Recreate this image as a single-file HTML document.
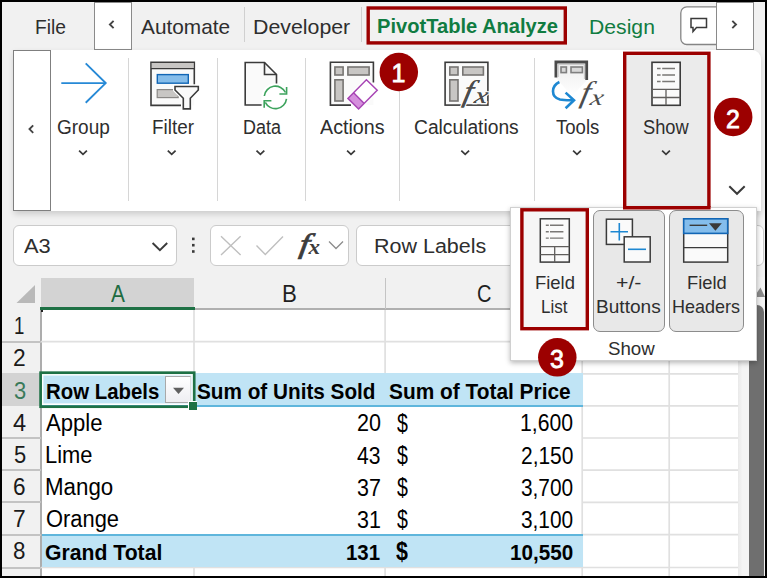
<!DOCTYPE html>
<html lang="en">
<head>
<meta charset="utf-8">
<title>PivotTable Analyze - Show - Field List</title>
<style>
html,body{margin:0;padding:0;}
body{width:767px;height:578px;overflow:hidden;background:#f1f1f1;position:relative;font-family:"Liberation Sans",sans-serif;}
#app{position:absolute;left:0;top:0;width:767px;height:578px;overflow:hidden;}
.abs,.a{position:absolute;}
.t{position:absolute;white-space:nowrap;line-height:1;transform-origin:0 0;color:#2e2e2e;}
.sep{position:absolute;width:1px;background:#d6d6d6;}
.gl{position:absolute;background:#e7e7e7;}
svg{position:absolute;overflow:visible;}
.circ{position:absolute;width:38px;height:38px;border-radius:50%;background:#990000;}
</style>
</head>
<body>
<div id="app">
<!-- ===== tab row ===== -->
<div class="a" style="left:94px;top:2px;width:36px;height:46px;background:#fff;border:1px solid #8a8a8a;"></div>
<svg style="left:0;top:0" width="767" height="578" viewBox="0 0 767 578"><path d="M113.6 20.9 L109.9 24.5 L113.6 28.1" fill="none" stroke="#444" stroke-width="1.9"/></svg>
<div class="sep" style="left:244px;top:7px;height:35px;background:#d0d0d0"></div>
<div class="sep" style="left:361px;top:7px;height:35px;background:#d0d0d0"></div>
<svg style="left:0;top:0" width="767" height="578" viewBox="0 0 767 578"><rect x="368.2" y="8" width="197.1" height="34.9" fill="none" stroke="#9c0000" stroke-width="3.4"/></svg>
<svg style="left:0;top:0" width="767" height="578" viewBox="0 0 767 578"><rect x="680.8" y="6.9" width="42" height="37.6" rx="6" fill="#fff" stroke="#858585" stroke-width="1.3"/></svg>
<svg style="left:689px;top:16px" width="20" height="18" viewBox="0 0 20 18"><path d="M2 2.5 H17.5 V11.5 H7.5 L4 15.5 V11.5 H2 Z" fill="none" stroke="#3a3a3a" stroke-width="1.5" stroke-linejoin="miter"/></svg>
<div class="a" style="left:716px;top:2px;width:36px;height:46px;background:#fff;border:1px solid #8a8a8a;"></div>
<svg style="left:0;top:0" width="767" height="578" viewBox="0 0 767 578"><path d="M732.3 20.9 L736 24.5 L732.3 28.1" fill="none" stroke="#444" stroke-width="1.9"/></svg>

<!-- ===== ribbon panel ===== -->
<div class="a" style="left:14px;top:50px;width:747px;height:161px;background:#fff;border-radius:0 9px 0 0;box-shadow:0 3px 6px rgba(0,0,0,.16);"></div>
<div class="a" style="left:13px;top:50px;width:36.2px;height:159.2px;background:#fff;border:1px solid #7f7f7f;box-sizing:content-box;"></div>
<svg style="left:0;top:0" width="767" height="578" viewBox="0 0 767 578"><path d="M33.2 125.4 L29.5 129.1 L33.2 132.8" fill="none" stroke="#444" stroke-width="1.9"/></svg>
<div class="sep" style="left:128px;top:58px;height:143px"></div>
<div class="sep" style="left:217px;top:58px;height:143px"></div>
<div class="sep" style="left:305px;top:58px;height:143px"></div>
<div class="sep" style="left:399px;top:58px;height:143px"></div>
<div class="sep" style="left:534px;top:58px;height:143px"></div>
<!-- Show selected box -->
<svg style="left:0;top:0" width="767" height="578" viewBox="0 0 767 578"><rect x="624.7" y="53.3" width="84.2" height="154.5" fill="#ebebeb" stroke="#9c0000" stroke-width="3.4"/></svg>
<svg style="left:0;top:0" width="767" height="578" viewBox="0 0 767 578">
<!-- Group arrow -->
<g fill="none" stroke="#2689d6" stroke-width="1.9" stroke-linecap="butt">
<path d="M61.3 83.1 H105"/><path d="M85.7 63.4 L105.7 83.1 L85.7 102.8"/>
</g>
<!-- label chevrons -->
<g fill="none" stroke="#3a3a3a" stroke-width="1.8">
<path d="M79.1 150.7 L83.0 154.3 L86.9 150.7"/>
<path d="M167.8 150.7 L171.7 154.3 L175.6 150.7"/>
<path d="M256.5 150.7 L260.4 154.3 L264.3 150.7"/>
<path d="M347.1 150.7 L351.0 154.3 L354.9 150.7"/>
<path d="M461.3 150.7 L465.2 154.3 L469.1 150.7"/>
<path d="M573.1 150.7 L577.0 154.3 L580.9 150.7"/>
<path d="M662.1 150.7 L666.0 154.3 L669.9 150.7"/>
<path d="M729.3 186.2 L737 193.8 L744.7 186.2" stroke-width="2"/>
</g>
<!-- Filter icon -->
<g>
<rect x="151" y="62.2" width="43.3" height="43.2" fill="#fafafa"/>
<path d="M181 105.4 H151 V62.2 H194.3 V84.6" fill="none" stroke="#3b3b3b" stroke-width="1.6"/>
<rect x="151.8" y="63" width="41.7" height="5.2" fill="#c8c6c4"/>
<path d="M151 68.6 H194.3" stroke="#3b3b3b" stroke-width="1.3"/>
<rect x="157.3" y="74.6" width="31" height="8.6" fill="#86bdea" stroke="#1266b5" stroke-width="1.4"/>
<rect x="157.2" y="89.6" width="21" height="8" fill="#c8c6c4" stroke="#8a8886" stroke-width="1.2"/>
<path d="M175 86.5 H198.3 V90 L190.3 98.3 V108.9 H183.3 V98.3 L175 90 Z" fill="#fff" stroke="#fff" stroke-width="4"/>
<path d="M175 86.5 H198.3 V90 L190.3 98.3 V108.9 H183.3 V98.3 L175 90 Z" fill="#fafafa" stroke="#3b3b3b" stroke-width="1.6"/>
</g>
<!-- Data icon -->
<g>
<path d="M245.2 62.5 H264.5 L276.5 74.5 V105 H245.2 Z" fill="#fafafa" stroke="none"/>
<circle cx="275.4" cy="97.4" r="14" fill="#fff"/>
<path d="M261.6 105 H245.2 V62.5 H264.5 L276.5 74.5 V83.6" fill="none" stroke="#3b3b3b" stroke-width="1.6"/>
<path d="M264.5 62.5 V74.5 H276.5" fill="none" stroke="#3b3b3b" stroke-width="1.6"/>
<g fill="none" stroke="#3da35d" stroke-width="1.6">
<path d="M264.3 96 A11.2 11.2 0 0 1 285.5 92.5"/>
<path d="M286.6 87 V94 H279.4"/>
<path d="M286.5 98.8 A11.2 11.2 0 0 1 265.3 102.3"/>
<path d="M264.2 107.8 V100.8 H271.4"/>
</g>
</g>
<!-- Actions icon -->
<g>
<rect x="330.4" y="62.3" width="43" height="42.8" fill="#fafafa"/>
<path d="M351 105.1 H330.4 V62.3 H373.4 V82.6" fill="none" stroke="#3b3b3b" stroke-width="1.6"/>
<rect x="334.9" y="67" width="8.2" height="8" fill="#c8c6c4" stroke="#777573" stroke-width="1.6"/>
<rect x="347.9" y="67" width="21.2" height="8" fill="#c8c6c4" stroke="#777573" stroke-width="1.6"/>
<rect x="334.9" y="79.8" width="8.2" height="21.2" fill="#c8c6c4" stroke="#777573" stroke-width="1.6"/>
<path d="M366.4 79.8 L377.2 90.2 L358.6 109 L347.9 98.4 Z" fill="#fff" stroke="#fff" stroke-width="4"/>
<path d="M353.6 92.8 L364.2 103.5 L358.6 109 L347.9 98.4 Z" fill="#d58fdd"/>
<path d="M366.4 79.8 L377.2 90.2 L358.6 109 L347.9 98.4 Z M353.6 92.8 L364.2 103.5" fill="none" stroke="#a846b5" stroke-width="1.5"/>
</g>
<!-- Calculations icon -->
<g>
<rect x="445.1" y="62.3" width="42.8" height="42.8" fill="#fafafa" stroke="#3b3b3b" stroke-width="1.6"/>
<rect x="449.8" y="67" width="8.2" height="8" fill="#c8c6c4" stroke="#777573" stroke-width="1.6"/>
<rect x="462.8" y="67" width="20.6" height="8" fill="#c8c6c4" stroke="#777573" stroke-width="1.6"/>
<rect x="449.8" y="79.8" width="8.2" height="21.2" fill="#c8c6c4" stroke="#777573" stroke-width="1.6"/>
<g font-family="'Liberation Serif',serif" font-style="italic" fill="#4c4c4c" stroke="#fafafa" stroke-width="2.4" paint-order="stroke">
<text transform="translate(462,101) skewX(-12) scale(1.15,1)" font-size="30">f</text>
<text transform="translate(473.5,102.9) skewX(-12) scale(1.27,1)" font-size="23">x</text>
</g>
<g font-family="'Liberation Serif',serif" font-style="italic" fill="#4c4c4c">
<text transform="translate(462,101) skewX(-12) scale(1.15,1)" font-size="30">f</text>
<text transform="translate(473.5,102.9) skewX(-12) scale(1.27,1)" font-size="23">x</text>
</g>
</g>
<!-- Tools icon -->
<g>
<linearGradient id="tg" x1="0" y1="0" x2="0" y2="1"><stop offset="0" stop-color="#ececec"/><stop offset="1" stop-color="#ffffff"/></linearGradient>
<path d="M556 62 H587 V80 L572 96 L556 78 Z" fill="url(#tg)"/>
<path d="M555.9 77.4 V62 H586.7 V80" fill="none" stroke="#4a4a4a" stroke-width="2.8"/>
<path d="M558.2 77 V64.3 H584.4 V79" fill="none" stroke="#c4c4c4" stroke-width="1"/>
<rect x="561" y="67" width="5.4" height="5.6" fill="#d8d8d8" stroke="#808080" stroke-width="1.6"/>
<rect x="571" y="67" width="11.4" height="5.6" fill="#d8d8d8" stroke="#808080" stroke-width="1.6"/>
<g fill="none" stroke="#1e88d2" stroke-width="2.6">
<path d="M559.4 82 C 551 86, 550.5 97, 560 99.6 C 564 100.5, 569 100.3, 573.6 100.3"/>
<path d="M565.6 92.6 L574 100.3 L565.6 108.2"/>
</g>
<g font-family="'Liberation Serif',serif" font-style="italic" fill="#4c4c4c">
<text transform="translate(579.3,102.2) skewX(-12) scale(1.15,1)" font-size="30">f</text>
<text transform="translate(589.2,105.2) skewX(-12) scale(1.27,1)" font-size="23">x</text>
</g>
</g>
<!-- Show icon -->
<g>
<rect x="652" y="62.3" width="28.2" height="43" fill="#fafafa" stroke="#3b3b3b" stroke-width="1.6"/>
<g stroke="#7a7876" stroke-width="1.5"><path d="M657 68.5 H660.6 M662.2 68.5 H675 M657 75 H660.6 M662.2 75 H675 M657 81.5 H660.6 M662.2 81.5 H675"/></g>
<g stroke="#605e5c" stroke-width="1.3"><path d="M652 89.4 H680.2 M652 97.5 H680.2 M666 89.4 V105.3"/></g>
</g>
</svg>
<!-- ===== formula bar ===== -->
<div class="a" style="left:13px;top:224.6px;width:164px;height:41px;background:#fff;border:1px solid #cbcbcb;border-radius:6px;box-sizing:border-box;"></div>
<div class="a" style="left:210px;top:225px;width:138.5px;height:41px;background:#fff;border:1px solid #cbcbcb;border-radius:6px;box-sizing:border-box;"></div>
<div class="a" style="left:356px;top:225px;width:407.5px;height:41px;background:#fff;border:1px solid #cbcbcb;border-radius:6px;box-sizing:border-box;"></div>
<svg style="left:0;top:0" width="767" height="578" viewBox="0 0 767 578">
<path d="M152.6 243 L159.9 250.2 L167.2 243" fill="none" stroke="#3a3a3a" stroke-width="1.9"/>
<g fill="#3a3a3a"><rect x="192" y="237.6" width="2.6" height="2.6"/><rect x="192" y="243.9" width="2.6" height="2.6"/><rect x="192" y="250.2" width="2.6" height="2.6"/></g>
<g fill="none" stroke="#bfbfbf" stroke-width="1.4">
<path d="M221 236.3 L240.6 255 M240.6 236.3 L221 255"/>
<path d="M256.5 245.5 L265.3 254.4 L283 236.6"/>
</g>
<path d="M329 241.5 L336 248.5 L343 241.5" fill="none" stroke="#8c8c8c" stroke-width="1.3"/>
<g font-family="'Liberation Serif',serif" font-style="italic" font-weight="bold" fill="#3c3c3c">
<text transform="translate(298.6,252.6) skewX(-8) scale(1.3,1)" font-size="28" font-weight="normal" stroke="#3c3c3c" stroke-width="0.7">f</text>
<text transform="translate(308.6,253.7) scale(1.15,1)" font-size="20">x</text>
</g>
</svg>
<!-- ===== grid ===== -->
<div class="a" style="left:41px;top:310px;width:697px;height:268px;background:#fff;"></div>
<!-- column header -->
<div class="a" style="left:41px;top:277.5px;width:153px;height:29.5px;background:#d3d3d3;"></div>
<div class="a" style="left:40px;top:306.7px;width:154.5px;height:3.2px;background:#1e7145;"></div>
<div class="a" style="left:194.5px;top:308px;width:543.5px;height:2px;background:#b0b0b0;"></div>
<div class="a" style="left:385px;top:278px;width:1px;height:31px;background:#c4c4c4;"></div>
<div class="a" style="left:583px;top:278px;width:1px;height:31px;background:#c4c4c4;"></div>
<div class="a" style="left:669.5px;top:278px;width:1px;height:31px;background:#c4c4c4;"></div>
<svg style="left:0;top:0" width="767" height="578" viewBox="0 0 767 578"><path d="M35 285 V303 H16.5 Z" fill="#b9b9b9"/></svg>
<!-- row header -->
<div class="a" style="left:2px;top:373px;width:38.5px;height:33px;background:#d3d3d3;"></div>
<div class="a" style="left:40px;top:310px;width:2px;height:268px;background:#adadad;"></div>
<div class="a" style="left:2px;top:340.6px;width:39px;height:2px;background:#c3c3c3;"></div>
<div class="a" style="left:2px;top:437.0px;width:39px;height:2px;background:#c3c3c3;"></div>
<div class="a" style="left:2px;top:469.2px;width:39px;height:2px;background:#c3c3c3;"></div>
<div class="a" style="left:2px;top:501.4px;width:39px;height:2px;background:#c3c3c3;"></div>
<div class="a" style="left:2px;top:534.0px;width:39px;height:2px;background:#c3c3c3;"></div>
<div class="a" style="left:2px;top:566.5px;width:39px;height:2px;background:#c3c3c3;"></div>
<!-- gridlines -->
<svg style="left:0;top:0" width="767" height="578" viewBox="0 0 767 578"><path d="M194 310 V373 M194 568 V578 M385.1 310 V373 M385.1 568 V578 M582.2 310 V578 M669.2 310 V578 M41 341.6 H738 M41 373.8 H738 M583 405.9 H738 M583 438.0 H738 M583 470.2 H738 M583 502.4 H738 M583 534.7 H738 M41 567.5 H738" fill="none" stroke="#e0e0e0" stroke-width="1.7"/></svg>
<!-- pivot fills -->
<div class="a" style="left:41.5px;top:373px;width:541.5px;height:32px;background:#c0e4f5;"></div>
<div class="a" style="left:41.5px;top:405px;width:541.5px;height:2px;background:#5fb6dc;"></div>
<div class="a" style="left:41.5px;top:407px;width:539.6px;height:127px;background:#fff;"></div>
<div class="a" style="left:41.5px;top:534px;width:541.5px;height:2px;background:#5fb6dc;"></div>
<div class="a" style="left:41.5px;top:536px;width:541.5px;height:31.4px;background:#c0e4f5;"></div>
<!-- filter dropdown button -->
<div class="a" style="left:165px;top:376px;width:26px;height:27px;box-sizing:border-box;border:1px solid #a9a9a9;border-right-color:#e0e0e0;background:linear-gradient(#ffffff,#eeeef2);"></div>
<svg style="left:0;top:0" width="767" height="578" viewBox="0 0 767 578"><path d="M173 387.7 H184 L178.5 394 Z" fill="#606060"/></svg>
<!-- selected cell -->
<svg style="left:0;top:0" width="767" height="578" viewBox="0 0 767 578"><rect x="42.6" y="374.7" width="149.6" height="29.5" fill="none" stroke="#fff" stroke-width="1.6"/><rect x="40.6" y="372.7" width="153.6" height="34" fill="none" stroke="#1e7145" stroke-width="2.7"/></svg>
<div class="a" style="left:187.6px;top:400.6px;width:9.4px;height:9.4px;box-sizing:border-box;background:#1e7145;border:1.5px solid #fff;border-right:none;border-bottom:none;"></div>
<div class="a" style="left:41px;top:310px;width:1.6px;height:1.6px;background:#222;"></div>
<!-- scrollbar -->
<div class="a" style="left:738px;top:277px;width:27px;height:301px;background:#f3f3f3;"></div>
<div class="a" style="left:738px;top:310px;width:11px;height:268px;background:linear-gradient(90deg,#e9e9e9,#f5f5f5 40%);"></div>
<div class="a" style="left:749px;top:305px;width:15px;height:273px;background:#6f6f6f;border-radius:7px 7px 0 0;"></div>
<svg style="left:0;top:0" width="767" height="578" viewBox="0 0 767 578"><path d="M754 297 L760.5 287.5 L765 297 Z" fill="#8a8a8a"/></svg>
<!-- ===== popup ===== -->
<div class="a" style="left:509.5px;top:206.5px;width:247.5px;height:154px;background:#fff;border:1px solid #d0d0d0;box-sizing:border-box;box-shadow:0 2px 5px rgba(0,0,0,.28);"></div>
<svg style="left:0;top:0" width="767" height="578" viewBox="0 0 767 578"><rect x="521.9" y="209.8" width="65.4" height="118.9" fill="#f6f6f6" stroke="#9c0000" stroke-width="3.4"/></svg>
<div class="a" style="left:593px;top:210.3px;width:71.6px;height:121.5px;box-sizing:border-box;border:1px solid #8c8c8c;border-radius:7px;background:#e8e8e8;"></div>
<div class="a" style="left:668.7px;top:210.3px;width:75.6px;height:121.5px;box-sizing:border-box;border:1px solid #8c8c8c;border-radius:7px;background:#e8e8e8;"></div>
<svg style="left:0;top:0" width="767" height="578" viewBox="0 0 767 578">
<!-- field list icon -->
<rect x="540.3" y="218.8" width="29" height="43.3" fill="#fafafa" stroke="#3b3b3b" stroke-width="1.5"/>
<g stroke="#7a7876" stroke-width="1.4"><path d="M545.8 225.2 H548.8 M550 225.2 H563.4 M545.8 231.7 H548.8 M550 231.7 H563.4 M545.8 238.1 H548.8 M550 238.1 H563.4"/></g>
<g stroke="#605e5c" stroke-width="1.3"><path d="M540.3 246.7 H569.3 M540.3 254.6 H569.3 M554.7 246.7 V262.1"/></g>
<!-- +/- icon -->
<rect x="606.4" y="219.2" width="26" height="25.2" fill="#fafafa" stroke="#3b3b3b" stroke-width="1.5"/>
<path d="M610.5 231.7 H628 M619.3 223 V240.5" stroke="#1e88d2" stroke-width="1.6" fill="none"/>
<rect x="624.2" y="236.8" width="26" height="25.2" fill="#fafafa" stroke="#3b3b3b" stroke-width="1.5"/>
<path d="M628 249.3 H646" stroke="#1e88d2" stroke-width="1.6" fill="none"/>
<!-- field headers icon -->
<rect x="683.7" y="218.8" width="44" height="43.3" fill="#fafafa" stroke="#3b3b3b" stroke-width="1.5"/>
<path d="M683.7 247.6 H727.7" stroke="#3b3b3b" stroke-width="1.4"/>
<rect x="683.7" y="218.8" width="44" height="14.6" fill="#84bdec" stroke="#1266b5" stroke-width="1.6"/>
<path d="M689.6 225.3 H707.2" stroke="#3a3a3a" stroke-width="1.4"/>
<path d="M709 223.2 H721.8 L715.4 230.8 Z" fill="#3a3a3a"/>
</svg>
<svg style="left:0;top:0" width="767" height="578" viewBox="0 0 767 578"><path d="M623 207.8 H710.6" fill="none" stroke="#9c0000" stroke-width="3.4"/></svg>

<span class="t" style="left:35.14px;top:16px;font-size:21px;transform:scaleX(0.9149);">File</span>
<span class="t" style="left:141.40px;top:16px;font-size:21px;transform:scaleX(0.9909);">Automate</span>
<span class="t" style="left:253.07px;top:16px;font-size:21px;transform:scaleX(1.0157);">Developer</span>
<span class="t" style="left:376.86px;top:15px;font-size:21px;transform:scaleX(0.9576);font-weight:bold;color:#107c41;">PivotTable Analyze</span>
<span class="t" style="left:588.79px;top:16px;font-size:21px;transform:scaleX(1.0082);color:#107c41;">Design</span>
<span class="t" style="left:56.82px;top:118px;font-size:19.5px;transform:scaleX(0.9743);">Group</span>
<span class="t" style="left:151.85px;top:118px;font-size:19.5px;transform:scaleX(0.9677);">Filter</span>
<span class="t" style="left:242.53px;top:118px;font-size:19.5px;transform:scaleX(0.9207);">Data</span>
<span class="t" style="left:320.40px;top:118px;font-size:19.5px;transform:scaleX(1.0095);">Actions</span>
<span class="t" style="left:414.11px;top:118px;font-size:19.5px;transform:scaleX(0.9859);">Calculations</span>
<span class="t" style="left:555.92px;top:118px;font-size:19.5px;transform:scaleX(0.9512);">Tools</span>
<span class="t" style="left:642.85px;top:118px;font-size:19.5px;transform:scaleX(0.9377);">Show</span>
<span class="t" style="left:24.40px;top:236px;font-size:20px;transform:scaleX(1.0914);">A3</span>
<span class="t" style="left:374.28px;top:236px;font-size:20px;transform:scaleX(1.0743);">Row Labels</span>
<span class="t" style="left:110.95px;top:283px;font-size:23px;transform:scaleX(0.9085);color:#1e6b41;">A</span>
<span class="t" style="left:282.06px;top:283px;font-size:23px;transform:scaleX(0.9677);color:#1f1f1f;">B</span>
<span class="t" style="left:477.24px;top:283px;font-size:23px;transform:scaleX(0.8707);color:#1f1f1f;">C</span>
<span class="t" style="left:14.42px;top:315px;font-size:23px;transform:scaleX(0.8100);color:#1a1a1a;">1</span>
<span class="t" style="left:13.31px;top:347px;font-size:23px;transform:scaleX(0.9906);color:#1a1a1a;">2</span>
<span class="t" style="left:13.64px;top:380px;font-size:23px;transform:scaleX(0.9545);color:#3a7a5a;">3</span>
<span class="t" style="left:13.09px;top:412px;font-size:23px;transform:scaleX(1.0256);color:#1a1a1a;">4</span>
<span class="t" style="left:13.54px;top:444px;font-size:23px;transform:scaleX(0.9545);color:#1a1a1a;">5</span>
<span class="t" style="left:13.32px;top:476px;font-size:23px;transform:scaleX(0.9813);color:#1a1a1a;">6</span>
<span class="t" style="left:13.31px;top:508px;font-size:23px;transform:scaleX(0.9906);color:#1a1a1a;">7</span>
<span class="t" style="left:13.43px;top:540px;font-size:23px;transform:scaleX(0.9722);color:#1a1a1a;">8</span>
<span class="t" style="left:45.80px;top:381px;font-size:22px;transform:scaleX(0.9266);font-weight:bold;color:#000;">Row Labels</span>
<span class="t" style="left:197.43px;top:381px;font-size:22px;transform:scaleX(0.9424);font-weight:bold;color:#000;">Sum of Units Sold</span>
<span class="t" style="left:388.63px;top:381px;font-size:22px;transform:scaleX(0.9486);font-weight:bold;color:#000;">Sum of Total Price</span>
<span class="t" style="left:46.20px;top:412px;font-size:23px;transform:scaleX(0.9596);color:#000;">Apple</span>
<span class="t" style="left:45.29px;top:444px;font-size:23px;transform:scaleX(0.9520);color:#000;">Lime</span>
<span class="t" style="left:45.25px;top:476px;font-size:23px;transform:scaleX(0.9699);color:#000;">Mango</span>
<span class="t" style="left:45.85px;top:508px;font-size:23px;transform:scaleX(0.9515);color:#000;">Orange</span>
<span class="t" style="left:45.13px;top:542px;font-size:22px;transform:scaleX(0.9631);font-weight:bold;color:#000;">Grand Total</span>
<span class="t" style="left:356.57px;top:412px;font-size:23px;transform:scaleX(0.9368);color:#000;">20</span>
<span class="t" style="left:357.14px;top:445px;font-size:23px;transform:scaleX(0.9173);color:#000;">43</span>
<span class="t" style="left:356.85px;top:477px;font-size:23px;transform:scaleX(0.9328);color:#000;">37</span>
<span class="t" style="left:356.85px;top:509px;font-size:23px;transform:scaleX(0.9328);color:#000;">31</span>
<span class="t" style="left:346.23px;top:542px;font-size:22.5px;transform:scaleX(0.9064);font-weight:bold;color:#000;">131</span>
<span class="t" style="left:396.64px;top:411px;font-size:25px;transform:scaleX(0.7836);color:#000;">$</span>
<span class="t" style="left:396.64px;top:443px;font-size:25px;transform:scaleX(0.7836);color:#000;">$</span>
<span class="t" style="left:396.64px;top:475px;font-size:25px;transform:scaleX(0.7836);color:#000;">$</span>
<span class="t" style="left:396.64px;top:507px;font-size:25px;transform:scaleX(0.7836);color:#000;">$</span>
<span class="t" style="left:396.34px;top:539px;font-size:25px;transform:scaleX(0.8571);font-weight:bold;color:#000;">$</span>
<span class="t" style="left:520.03px;top:412px;font-size:23px;transform:scaleX(0.9206);color:#000;">1,600</span>
<span class="t" style="left:520.60px;top:445px;font-size:23px;transform:scaleX(0.9107);color:#000;">2,150</span>
<span class="t" style="left:520.88px;top:477px;font-size:23px;transform:scaleX(0.9058);color:#000;">3,700</span>
<span class="t" style="left:520.88px;top:509px;font-size:23px;transform:scaleX(0.9058);color:#000;">3,100</span>
<span class="t" style="left:509.92px;top:542px;font-size:22.5px;transform:scaleX(0.9172);font-weight:bold;color:#000;">10,550</span>
<span class="t" style="left:534.50px;top:274px;font-size:18.5px;transform:scaleX(0.9971);">Field</span>
<span class="t" style="left:541.22px;top:298px;font-size:18.5px;transform:scaleX(0.9175);">List</span>
<span class="t" style="left:616.47px;top:274px;font-size:18.5px;transform:scaleX(1.1495);">+/-</span>
<span class="t" style="left:595.95px;top:298px;font-size:18.5px;transform:scaleX(1.0316);">Buttons</span>
<span class="t" style="left:686.82px;top:274px;font-size:18.5px;transform:scaleX(0.9891);">Field</span>
<span class="t" style="left:671.84px;top:298px;font-size:18.5px;transform:scaleX(0.9738);">Headers</span>
<span class="t" style="left:608.49px;top:340px;font-size:18.5px;transform:scaleX(1.0106);">Show</span>
<svg style="left:0;top:0" width="767" height="578" viewBox="0 0 767 578">
<circle cx="398.8" cy="72.05" r="19.25" fill="#9c0000"/>
<text x="398.5" y="82.1" text-anchor="middle" font-family="'Liberation Sans',sans-serif" font-size="25" fill="#fff" stroke="#fff" stroke-width="0.8">1</text>
<circle cx="733.2" cy="116.9" r="19.25" fill="#9c0000"/>
<text x="732.9" y="127.7" text-anchor="middle" font-family="'Liberation Sans',sans-serif" font-size="25" fill="#fff" stroke="#fff" stroke-width="0.8">2</text>
<circle cx="557.3" cy="357.35" r="19.25" fill="#9c0000"/>
<text x="557.0" y="368.2" text-anchor="middle" font-family="'Liberation Sans',sans-serif" font-size="25" fill="#fff" stroke="#fff" stroke-width="0.8">3</text>
</svg>
<div class="a" style="left:0;top:0;width:767px;height:2px;background:#000"></div>
<div class="a" style="left:0;top:0;width:2.3px;height:578px;background:#000"></div>
<div class="a" style="left:764.5px;top:0;width:2.5px;height:578px;background:#000"></div>
<div class="a" style="left:0;top:575.6px;width:767px;height:2.4px;background:#000"></div>
</div>
</body>
</html>
